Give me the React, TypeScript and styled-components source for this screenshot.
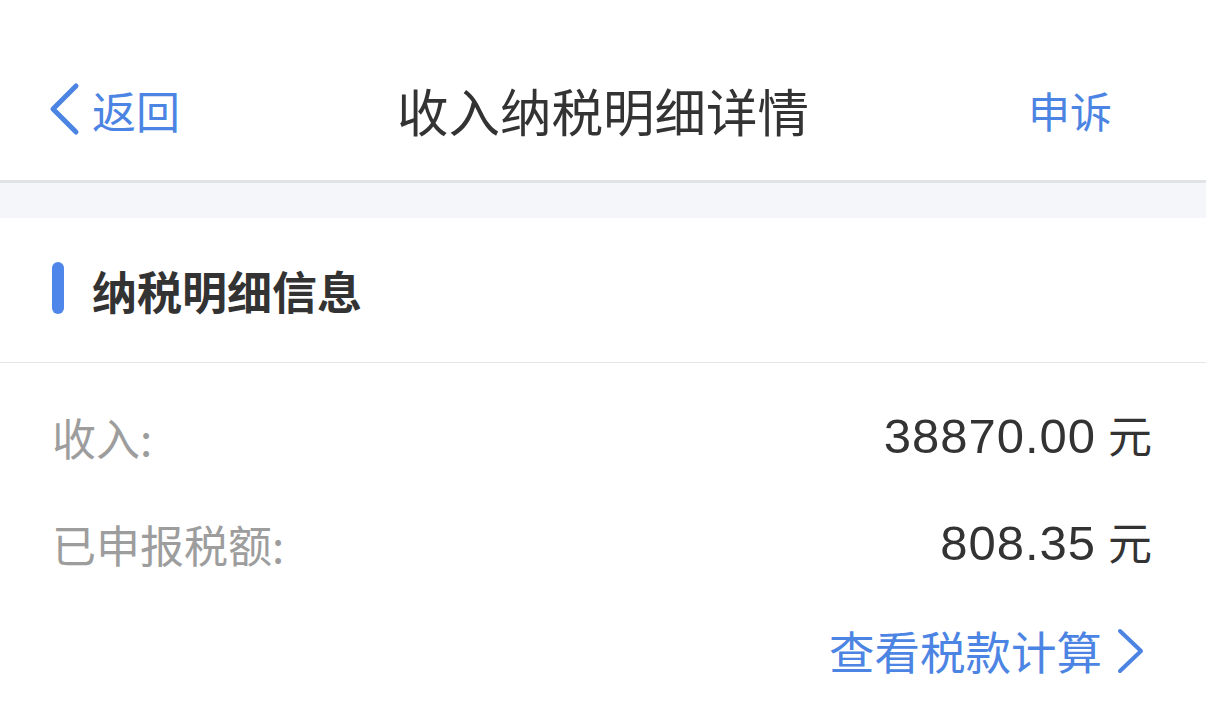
import React from "react";
import styled, { createGlobalStyle } from "styled-components";

const Global = createGlobalStyle`
  html, body {
    margin: 0;
    padding: 0;
    background: #ffffff;
  }
  body {
    font-family: "Noto Sans CJK SC", "Noto Sans", sans-serif;
  }
`;

const blue = "#4c84e3";

const Page = styled.div`
  width: 1206px;
  height: 728px;
  overflow: hidden;
  background: #ffffff;
`;

const NavBar = styled.header`
  position: relative;
  height: 140px;
  padding: 40px 94px 0 48px;
  border-bottom: 3px solid #e2e3e7;
  display: flex;
  align-items: center;
  justify-content: space-between;
`;

const Back = styled.div`
  display: flex;
  align-items: center;
  gap: 10px;
  color: ${blue};
  font-size: 44px;
  line-height: 1;
`;

/* centred over the bar regardless of the side items */
const Title = styled.h1`
  position: absolute;
  left: 0;
  right: 0;
  top: 40px;
  height: 140px;
  margin: 0;
  display: flex;
  align-items: center;
  justify-content: center;
  font-size: 51.5px;
  font-weight: 400;
  color: #333333;
  line-height: 1;
  pointer-events: none;
`;

const Action = styled.div`
  color: ${blue};
  font-size: 42px;
  line-height: 1;
`;

const Gap = styled.div`
  height: 35px;
  background: #f4f6f9;
`;

const SectionHead = styled.div`
  height: 144px;
  border-bottom: 1px solid #e6e6e8;
  display: flex;
  align-items: center;
  gap: 28px;
  padding-left: 52px;
`;

const Bar = styled.span`
  width: 12px;
  height: 52px;
  border-radius: 6px;
  background: #4f86ea;
  margin-top: -4px;
`;

const SectionTitle = styled.h2`
  margin: 0;
  font-size: 45px;
  font-weight: 700;
  color: #333333;
  line-height: 1;
`;

const Body = styled.div`
  padding: 20px 54px 0 52px;
`;

const Row = styled.div`
  height: 107px;
  display: flex;
  align-items: center;
  justify-content: space-between;
`;

const Label = styled.span`
  font-size: 44px;
  color: #9d9d9d;
  line-height: 1;
`;

const Value = styled.span`
  display: flex;
  align-items: baseline;
  gap: 12px;
  font-family: "Liberation Sans", "Noto Sans CJK SC", sans-serif;
  font-size: 49px;
  letter-spacing: 1px;
  color: #333333;
  line-height: 1;
`;

const Unit = styled.span`
  font-family: "Noto Sans CJK SC", sans-serif;
  font-size: 44px;
  letter-spacing: 0;
`;

const LinkRow = styled.div`
  height: 108px;
  display: flex;
  align-items: center;
  justify-content: flex-end;
  gap: 14px;
  color: ${blue};
  font-size: 45.5px;
  line-height: 1;
  padding-right: 8px;
`;

const ChevronLeft = () => (
  <svg width="34" height="56" viewBox="0 0 34 56">
    <polyline
      points="28,4 5,27 28,50"
      fill="none"
      stroke={blue}
      strokeWidth="5"
      strokeLinecap="round"
      strokeLinejoin="round"
    />
  </svg>
);

const ChevronRight = () => (
  <svg width="28" height="46" viewBox="0 0 28 46">
    <polyline
      points="4,3 25,23 4,43"
      fill="none"
      stroke={blue}
      strokeWidth="4"
      strokeLinecap="round"
      strokeLinejoin="round"
    />
  </svg>
);

export default function App() {
  return (
    <Page>
      <Global />
      <NavBar>
        <Back>
          <ChevronLeft />
          <span>返回</span>
        </Back>
        <Title>收入纳税明细详情</Title>
        <Action>申诉</Action>
      </NavBar>
      <Gap />
      <SectionHead>
        <Bar />
        <SectionTitle>纳税明细信息</SectionTitle>
      </SectionHead>
      <Body>
        <Row>
          <Label>收入:</Label>
          <Value>
            38870.00<Unit>元</Unit>
          </Value>
        </Row>
        <Row>
          <Label>已申报税额:</Label>
          <Value>
            808.35<Unit>元</Unit>
          </Value>
        </Row>
        <LinkRow>
          <span>查看税款计算</span>
          <ChevronRight />
        </LinkRow>
      </Body>
    </Page>
  );
}
